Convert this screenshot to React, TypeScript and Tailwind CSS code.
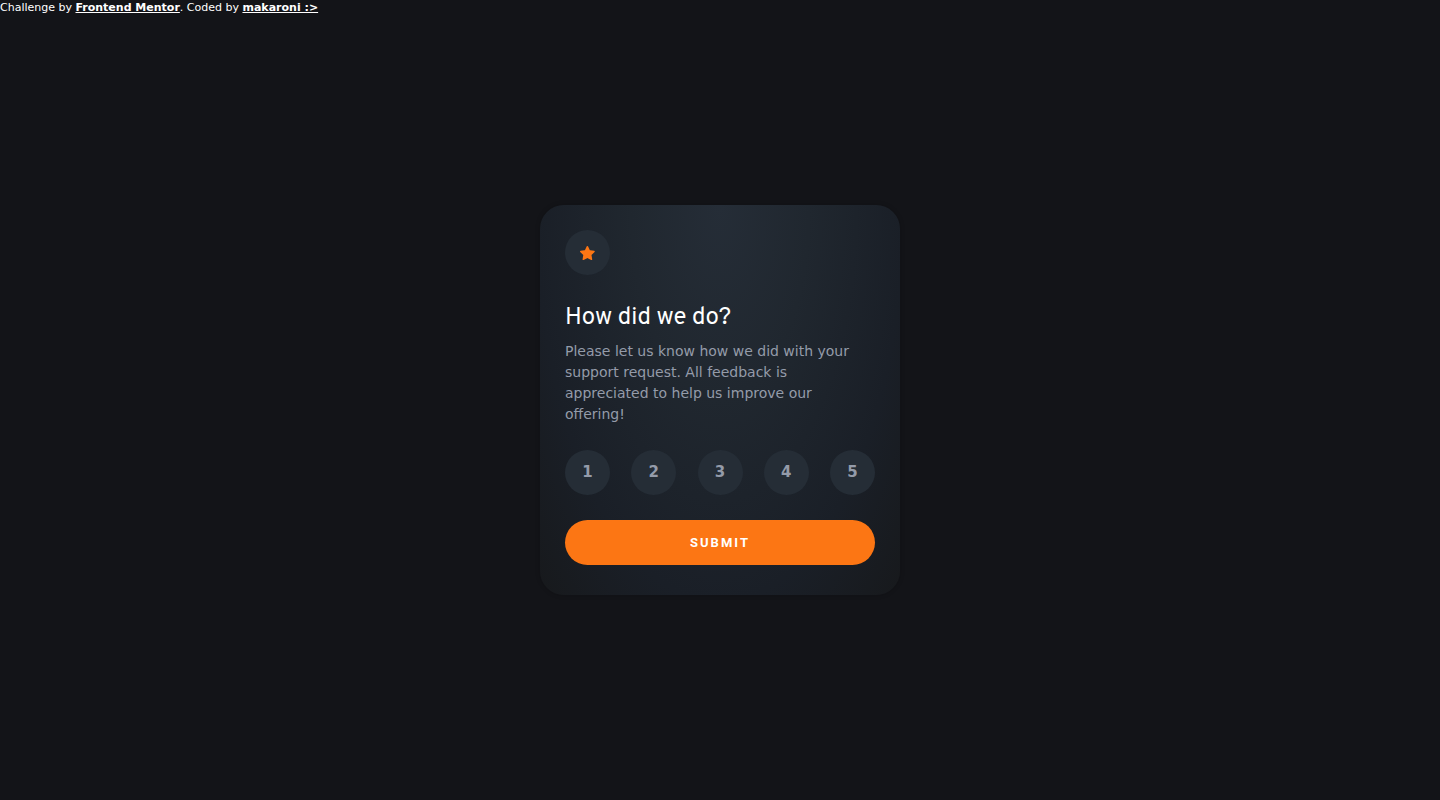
import { useState } from "react";

const ratings = [1, 2, 3, 4, 5];

function Star() {
  return (
    <svg className="h-4 w-[15px]" viewBox="0 0 17 16" fill="#fc7614" aria-hidden="true">
      <path d="m9.067.43 1.99 4.031c.112.228.33.386.58.422l4.45.647a.772.772 0 0 1 .427 1.316l-3.22 3.138a.773.773 0 0 0-.222.683l.76 4.431a.772.772 0 0 1-1.12.813l-3.98-2.092a.773.773 0 0 0-.718 0l-3.98 2.092a.772.772 0 0 1-1.119-.813l.76-4.431a.77.77 0 0 0-.222-.683L.233 6.846A.772.772 0 0 1 .661 5.53l4.449-.647a.772.772 0 0 0 .58-.422L7.68.43a.774.774 0 0 1 1.387 0Z" />
    </svg>
  );
}

export default function App() {
  const [rating, setRating] = useState<number | null>(null);

  return (
    <div className="grid min-h-screen grid-rows-[1fr_auto_1fr] justify-items-center bg-[#131418] font-['DejaVu_Sans',sans-serif]">
      <p className="justify-self-start text-[11px] leading-4 text-white">
        Challenge by{" "}
        <a href="https://www.frontendmentor.io" className="font-bold underline">
          Frontend Mentor
        </a>
        . Coded by{" "}
        <a href="#" className="font-bold underline">
          makaroni :&gt;
        </a>
      </p>
      <main className="w-full max-w-[360px] rounded-3xl bg-[radial-gradient(ellipse_at_top,#252d37,#20272f_35%,#1a1f27_72%,#17191c)] px-[25px] pt-[25px] pb-[30px] shadow-[0_0_5px_rgba(0,0,0,0.2)]">
        <div className="flex size-[45px] items-center justify-center rounded-full bg-[#252d36]">
          <Star />
        </div>
        <h1 className="mt-[25px] font-['Overpass','Roboto',sans-serif] text-2xl leading-9 font-normal text-white">
          How did we do?
        </h1>
        <p className="mt-[5px] text-sm leading-[21px] text-[#949ba9]">
          Please let us know how we did with your support request. All feedback is appreciated to
          help us improve our offering!
        </p>
        <form onSubmit={(event) => event.preventDefault()}>
          <div className="mt-[25px] flex justify-between" role="group" aria-label="Rating">
            {ratings.map((value) => (
              <button
                key={value}
                type="button"
                aria-pressed={rating === value}
                onClick={() => setRating(value)}
                className="size-[45px] cursor-pointer rounded-full bg-[#252d36] text-[15px] font-bold text-[#949ba9] hover:bg-[#fc7614] hover:text-white aria-pressed:bg-[#7c8798] aria-pressed:text-white"
              >
                {value}
              </button>
            ))}
          </div>
          <button
            type="submit"
            className="mt-[25px] h-[45px] w-full cursor-pointer rounded-full bg-[#fc7614] font-['Roboto',sans-serif] text-[13px] font-bold tracking-[2px] text-white hover:bg-white hover:text-[#fc7614]"
          >
            SUBMIT
          </button>
        </form>
      </main>
    </div>
  );
}
